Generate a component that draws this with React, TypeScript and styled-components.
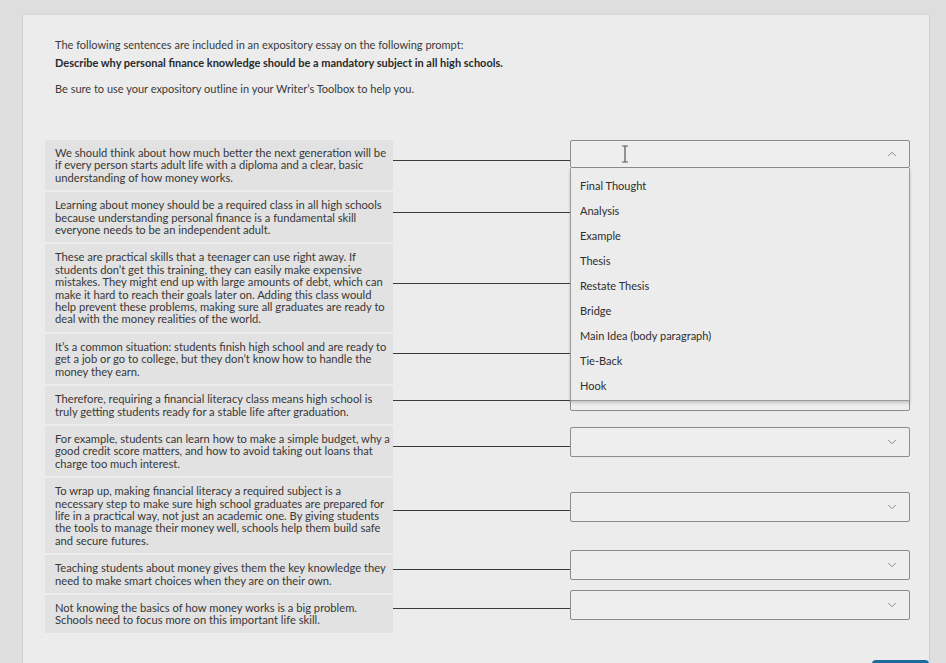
import styled, { createGlobalStyle } from 'styled-components';
import { ChevronDown, ChevronUp } from 'lucide-react';

const GlobalStyle = createGlobalStyle`
  html, body {
    margin: 0;
    padding: 0;
    background: #dedede;
  }
  body {
    font-family: Lato, "Open Sans", Arial, sans-serif;
    color: #363636;
    overflow: hidden;
  }
`;

const OPTIONS = [
  'Final Thought',
  'Analysis',
  'Example',
  'Thesis',
  'Restate Thesis',
  'Bridge',
  'Main Idea (body paragraph)',
  'Tie-Back',
  'Hook',
];

const SENTENCES = [
  'We should think about how much better the next generation will be if every person starts adult life with a diploma and a clear, basic understanding of how money works.',
  'Learning about money should be a required class in all high schools because understanding personal finance is a fundamental skill everyone needs to be an independent adult.',
  'These are practical skills that a teenager can use right away. If students don\u2019t get this training, they can easily make expensive mistakes. They might end up with large amounts of debt, which can make it hard to reach their goals later on. Adding this class would help prevent these problems, making sure all graduates are ready to deal with the money realities of the world.',
  'It\u2019s a common situation: students finish high school and are ready to get a job or go to college, but they don\u2019t know how to handle the money they earn.',
  'Therefore, requiring a financial literacy class means high school is truly getting students ready for a stable life after graduation.',
  'For example, students can learn how to make a simple budget, why a good credit score matters, and how to avoid taking out loans that charge too much interest.',
  'To wrap up, making financial literacy a required subject is a necessary step to make sure high school graduates are prepared for life in a practical way, not just an academic one. By giving students the tools to manage their money well, schools help them build safe and secure futures.',
  'Teaching students about money gives them the key knowledge they need to make smart choices when they are on their own.',
  'Not knowing the basics of how money works is a big problem. Schools need to focus more on this important life skill.',
];

const App = () => {
  return (
    <>
      <GlobalStyle />
      <Page>
        <Card>
          <Intro>
            <Prompt>The following sentences are included in an expository essay on the following prompt:</Prompt>
            <Prompt $bold>Describe why personal finance knowledge should be a mandatory subject in all high schools.</Prompt>
            <Prompt $gap>Be sure to use your expository outline in your Writer&rsquo;s Toolbox to help you.</Prompt>
          </Intro>

          <Matching>
            {SENTENCES.map((text, i) => (
              <Row key={i}>
                <Sentence>{text}</Sentence>
                <Connector />
                <SelectWrap $open={i === 0}>
                  <SelectBox $open={i === 0}>
                    {i === 0 && (
                      <Cursor width="8" height="18" viewBox="0 0 8 18">
                        <path d="M1 1h6M4 1v16M1 17h6" stroke="#555" strokeWidth="1.2" fill="none" />
                      </Cursor>
                    )}
                    {i === 0 ? (
                      <ChevronUp size={14} strokeWidth={1.5} color="#7a7a7a" />
                    ) : (
                      <ChevronDown size={14} strokeWidth={1.5} color="#7a7a7a" />
                    )}
                  </SelectBox>
                  {i === 0 && (
                    <Menu>
                      {OPTIONS.map((opt) => (
                        <Option key={opt}>{opt}</Option>
                      ))}
                    </Menu>
                  )}
                </SelectWrap>
              </Row>
            ))}
          </Matching>

          <Footer>
            <SubmitButton aria-label="Submit" />
          </Footer>
        </Card>
      </Page>
    </>
  );
};

const Page = styled.div`
  padding: 14px 16px 0 22px;
  height: 663px;
  box-sizing: border-box;
`;

const Card = styled.main`
  background: #ececec;
  border-left: 1px solid #cfcfcf;
  border-right: 1px solid #cfcfcf;
  border-top: 1px solid #d8d8d8;
  min-height: 700px;
  padding: 23px 0 0 22px;
  box-sizing: border-box;
`;

const Intro = styled.section`
  padding-left: 10px;
  margin-bottom: 44px;
`;

const Prompt = styled.p<{ $bold?: boolean; $gap?: boolean }>`
  margin: ${({ $gap }) => ($gap ? '12px 0 0' : '0 0 4px')};
  font-size: 11px;
  line-height: 14px;
  font-weight: ${({ $bold }) => ($bold ? 700 : 400)};
  color: ${({ $bold }) => ($bold ? '#2a2a2a' : '#3a3a3a')};
`;

const Matching = styled.section`
  display: flex;
  flex-direction: column;
`;

const Row = styled.div`
  display: grid;
  grid-template-columns: 348px 177px 340px;
  align-items: center;
`;

const Sentence = styled.div`
  background: #e2e2e2;
  border-bottom: 2px solid #ededed;
  padding: 7px 2px 6px 10px;
  font-size: 11.2px;
  line-height: 12.4px;
  color: #383838;
  align-self: stretch;
  display: flex;
  align-items: center;
`;

const Connector = styled.div`
  height: 1px;
  background: #3a3a3a;
  transform: translateY(-6px);
`;

const SelectWrap = styled.div<{ $open?: boolean }>`
  position: relative;
  align-self: ${({ $open }) => ($open ? 'start' : 'center')};
  transform: ${({ $open }) => ($open ? 'none' : 'translateY(-10px)')};
  z-index: ${({ $open }) => ($open ? 5 : 'auto')};
`;

const SelectBox = styled.div<{ $open?: boolean }>`
  position: relative;
  height: ${({ $open }) => ($open ? '28px' : '30px')};
  box-sizing: border-box;
  border: 1px solid #8c8c8c;
  border-radius: 2px;
  background: #eeeeee;
  display: flex;
  align-items: center;
  justify-content: flex-end;
  padding-right: 10px;
`;

const Cursor = styled.svg`
  position: absolute;
  left: 50px;
  top: 4px;
`;

const Menu = styled.ul`
  position: absolute;
  top: 28px;
  left: 0;
  right: 0;
  z-index: 5;
  margin: 0;
  padding: 5px 0 2px;
  list-style: none;
  background: #ececec;
  border: 1px solid #9a9a9a;
  border-top: none;
  box-shadow: 0 2px 3px rgba(0, 0, 0, 0.18);
`;

const Option = styled.li`
  height: 25px;
  line-height: 25px;
  padding-left: 9px;
  font-size: 11px;
  color: #2e2e2e;
`;

const Footer = styled.div`
  display: flex;
  justify-content: flex-end;
  padding: 25px 0 0;
`;

const SubmitButton = styled.button`
  width: 57px;
  height: 32px;
  border: none;
  border-radius: 4px 4px 0 0;
  background: #1d6a9c;
`;

export default App;
